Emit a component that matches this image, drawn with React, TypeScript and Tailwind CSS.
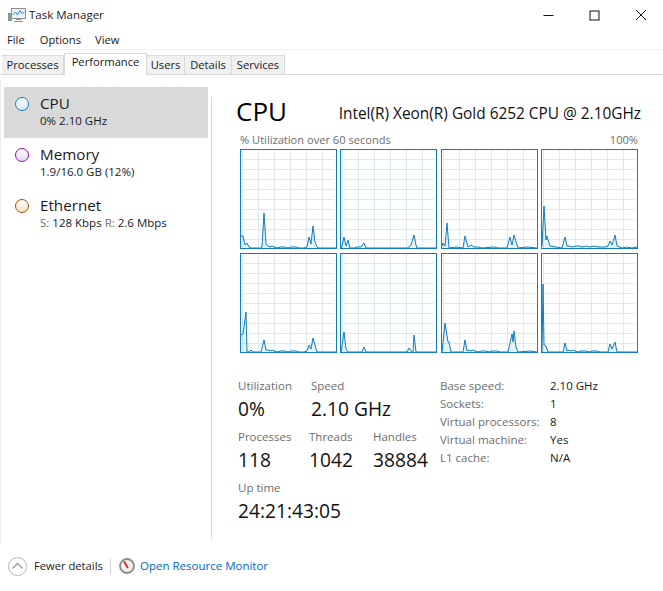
import { Fragment } from "react";

const FONT = "[font-family:'Open_Sans','Noto_Sans',sans-serif]";

const TABS = ["Processes", "Performance", "Users", "Details", "Services"];

const NOISE_A: [number, number][] = [[27, 2], [29, 1], [31, 2], [33, 1], [36, 0], [39, 1], [44, 1], [47, 0], [50, 1], [55, 1], [58, 0], [63, 0]];
const NOISE_B: [number, number][] = [[27, 2], [30, 1], [34, 2], [37, 2], [40, 1], [44, 2], [48, 1], [52, 2], [56, 1], [60, 1], [63, 1]];

// [x, height] samples for each logical processor, read off the picture
const CHARTS: [number, number][][] = [
  [[0, 12], [2, 12], [4, 3], [6, 5], [8, 1], [10, 0], [20, 0], [21, 1], [23, 35], [25, 4], ...NOISE_A, [66, 1], [68, 11], [70, 4], [72, 22], [74, 6], [76, 1], [77, 0], [95, 0]],
  [[0, 0], [1, 2], [3, 11], [5, 2], [7, 8], [9, 0], [14, 0], [15, 1], [20, 1], [23, 5], [25, 0], [66, 0], [68, 1], [70, 3], [73, 13], [75, 3], [76, 0], [95, 0]],
  [[0, 2], [1, 5], [3, 2], [5, 25], [7, 0], [14, 1], [21, 0], [23, 12], [26, 1], [29, 3], [32, 1], [36, 1], [40, 0], [52, 1], [56, 0], [65, 0], [68, 11], [70, 3], [72, 13], [76, 0], [85, 1], [95, 0]],
  [[0, 2], [2, 42], [4, 8], [5, 12], [8, 2], [20, 0], [23, 11], [25, 2], ...NOISE_B, [66, 2], [68, 7], [70, 3], [73, 13], [75, 2], [80, 0], [85, 1], [90, 0], [95, 1]],
  [[0, 17], [2, 18], [5, 40], [6, 0], [8, 0], [10, 2], [12, 0], [20, 0], [23, 12], [25, 2], ...NOISE_A, [66, 1], [68, 7], [70, 3], [72, 14], [76, 0], [95, 0]],
  [[0, 0], [3, 20], [5, 3], [7, 0], [21, 0], [23, 5], [25, 0], [66, 0], [68, 4], [71, 0], [72, 0], [73, 17], [75, 0], [95, 0]],
  [[0, 0], [3, 29], [6, 10], [7, 10], [9, 0], [21, 0], [23, 12], [25, 1], ...NOISE_A, [66, 0], [70, 18], [71, 10], [72, 21], [74, 5], [76, 0], [88, 1], [95, 0]],
  [[0, 0], [1, 68], [2, 7], [4, 6], [6, 0], [21, 0], [23, 9], [25, 1], ...NOISE_A, [66, 0], [68, 8], [70, 3], [73, 10], [75, 0], [95, 0]],
];

const H_LINES = [9.5, 19.5, 29.5, 39.5, 49.5, 59.5, 69.5, 79.5, 89.5];
const V_LINES = [1.5, 17.5, 33.5, 49.5, 65.5, 81.5];

const INFO = [
  ["Base speed:", "2.10 GHz"],
  ["Sockets:", "1"],
  ["Virtual processors:", "8"],
  ["Virtual machine:", "Yes"],
  ["L1 cache:", "N/A"],
];

function Chart({ samples }: { samples: [number, number][] }) {
  const line = samples.map(([x, h]) => `${x},${98 - h}`).join(" ");
  return (
    <div className="h-[100px] border border-[#117dbb] bg-white">
      <svg width="95" height="98" viewBox="0 0 95 98" className="block">
        {H_LINES.map((y) => (
          <line key={y} x1="1" x2="93" y1={y} y2={y} stroke="#d9eaf4" strokeWidth="1" />
        ))}
        {V_LINES.map((x) => (
          <line key={x} x1={x} x2={x} y1="0" y2="98" stroke="#d9eaf4" strokeWidth="1" />
        ))}
        <polygon points={`0,98 ${line} 95,98`} fill="#117dbb" fillOpacity="0.1" />
        <polyline points={line} fill="none" stroke="#117dbb" strokeWidth="1" />
      </svg>
    </div>
  );
}

function Swatch({ border, fill }: { border: string; fill: string }) {
  return (
    <svg width="16" height="16" viewBox="0 0 16 16" className="shrink-0">
      <defs>
        <linearGradient id={`g${border}`} x1="0" y1="0" x2="0" y2="1">
          <stop offset="0" stopColor="#ffffff" />
          <stop offset="1" stopColor={fill} />
        </linearGradient>
      </defs>
      <circle cx="8" cy="8" r="6.5" fill={`url(#g${border})`} stroke={border} strokeWidth="1" />
    </svg>
  );
}

function SideItem({ title, sub, border, fill, active }: { title: React.ReactNode; sub: React.ReactNode; border: string; fill: string; active?: boolean }) {
  return (
    <div className={`flex h-[51px] items-start pl-[10px] pt-[7px] ${active ? "bg-[#d9d9d9]" : ""}`}>
      <div className="pt-[2px]">
        <Swatch border={border} fill={fill} />
      </div>
      <div className="ml-[10px]">
        <div className="text-[15.2px] leading-[18px] text-[#1a1a1a]">{title}</div>
        <div className="mt-[1px] text-[11.5px] leading-[16px] text-[#1a1a1a]">{sub}</div>
      </div>
    </div>
  );
}

function Stat({ label, value, width }: { label: string; value: string; width: string }) {
  return (
    <div className={width}>
      <div className="text-[11.5px] leading-[16px] text-[#6d6d6d]">{label}</div>
      <div className="mt-[2px] text-[19.2px] leading-[26px] text-[#111]">{value}</div>
    </div>
  );
}

export default function App() {
  return (
    <div className={`flex h-[591px] w-[663px] flex-col overflow-hidden bg-white ${FONT} text-[#1a1a1a]`}>
      {/* title bar */}
      <div className="flex h-[30px] shrink-0 items-center">
        <svg width="18" height="16" viewBox="0 0 18 16" className="ml-[8px]">
          <rect x="3.5" y="1.5" width="14" height="10" fill="#eaf3fa" stroke="#8a8f94" />
          <path d="M4.5 8 L7.5 5 L9.5 8 L12 3.5 L14 6.5 L16.5 5" fill="none" stroke="#2f8ac6" strokeWidth="1" />
          <rect x="0.5" y="6.5" width="3" height="7" fill="#7fae7a" stroke="#8a8f94" />
          <path d="M8 12.5h5M6 14.5h9" stroke="#8a8f94" strokeWidth="1.2" />
        </svg>
        <span className="ml-[3px] text-[11.5px] text-[#222]">Task Manager</span>
        <div className="ml-auto flex items-center">
          <svg width="11" height="11" viewBox="0 0 11 11" className="mr-[35px]">
            <path d="M0.5 5.5H10.5" stroke="#111" strokeWidth="1" />
          </svg>
          <svg width="11" height="11" viewBox="0 0 11 11" className="mr-[35px]">
            <rect x="1" y="1" width="9" height="9" fill="none" stroke="#111" strokeWidth="1" />
          </svg>
          <svg width="12" height="12" viewBox="0 0 12 12" className="mr-[16px]">
            <path d="M1 1L11 11M11 1L1 11" stroke="#111" strokeWidth="1" />
          </svg>
        </div>
      </div>

      {/* menu */}
      <div className="flex h-[19px] shrink-0 items-center pl-[7px] text-[11.2px] leading-none">
        <span className="mr-[15px]">File</span>
        <span className="mr-[14px]">Options</span>
        <span>View</span>
      </div>
      <div className="h-[4px] shrink-0 border-t border-[#f0f0f0]" />

      {/* tabs */}
      <div className="flex h-[22px] shrink-0 items-end border-b border-[#d9d9d9] pl-[2px] text-[11.2px]">
        {TABS.map((tab) => (
          <Fragment key={tab}>
            {tab === "Performance" ? (
              <div className="relative z-10 -mb-px flex h-[22px] w-[83px] items-start justify-center border border-b-0 border-[#d9d9d9] bg-white leading-[15px]">
                {tab}
              </div>
            ) : (
              <div className={`flex h-[19px] items-center justify-center border border-b-0 border-l-0 border-[#d9d9d9] bg-[#f0f0f0] ${tab === "Processes" ? "w-[62px] border-l" : tab === "Users" ? "w-[38px]" : tab === "Details" ? "w-[47px]" : "w-[53px]"}`}>
                {tab}
              </div>
            )}
          </Fragment>
        ))}
      </div>

      {/* body */}
      <div className="flex min-h-0 flex-1">
        <div className="mt-[5px] w-px shrink-0 bg-[#ececec]" />
        <div className="w-[207px] shrink-0 pl-[3px] pt-[12px]">
          <SideItem active title="CPU" sub="0%  2.10 GHz" border="#117dbb" fill="#d5e8f4" />
          <SideItem title="Memory" sub="1.9/16.0 GB (12%)" border="#8b12ae" fill="#ecd5f2" />
          <SideItem
            title="Ethernet"
            sub={
              <>
                <span className="text-[#6d6d6d]">S:</span> 128 Kbps <span className="text-[#6d6d6d]">R:</span> 2.6 Mbps
              </>
            }
            border="#a74f01"
            fill="#f5dfc8"
          />
        </div>
        <div className="mt-[22px] mb-[4px] ml-[3px] w-px shrink-0 bg-[#d9d9d9]" />

        <div className="flex min-w-0 flex-1 flex-col pl-[25px]">
          <div className="flex h-[53px] items-end pt-[16px]">
            <span className="-ml-px text-[26px] leading-[34px] text-black">CPU</span>
            <span className="ml-auto mr-[22px] pb-[3px] text-[15.4px] leading-[22px] text-[#111]">Intel(R) Xeon(R) Gold 6252 CPU @ 2.10GHz</span>
          </div>
          <div className="ml-[3px] mr-[25px] mt-[4px] flex h-[16px] items-center justify-between text-[11.1px] text-[#6d6d6d]">
            <span>% Utilization over 60 seconds</span>
            <span>100%</span>
          </div>
          <div className="ml-[3px] mt-[1px] grid grid-cols-[97px_97px_97px_97px] gap-x-[3.4px] gap-y-[4px]">
            {CHARTS.map((samples, i) => (
              <Chart key={i} samples={samples} />
            ))}
          </div>

          <div className="mt-[25px] flex">
            <div className="w-[202px] shrink-0 pl-[1px]">
              <div className="flex h-[51px]">
                <Stat label="Utilization" value="0%" width="w-[73px]" />
                <Stat label="Speed" value="2.10 GHz" width="w-[100px]" />
              </div>
              <div className="flex h-[51px]">
                <Stat label="Processes" value="118" width="w-[71px]" />
                <Stat label="Threads" value="1042" width="w-[64px]" />
                <Stat label="Handles" value="38884" width="w-[60px]" />
              </div>
              <Stat label="Up time" value="24:21:43:05" width="w-[160px]" />
            </div>
            <div className="-mt-px ml-[1px] grid grid-cols-[110px_1fr] content-start text-[11.5px] leading-[18px]">
              {INFO.map(([k, v]) => (
                <Fragment key={k}>
                  <span className="text-[#6d6d6d]">{k}</span>
                  <span className="text-[#1a1a1a]">{v}</span>
                </Fragment>
              ))}
            </div>
          </div>
        </div>
      </div>

      {/* footer */}
      <div className="flex h-[48px] shrink-0 items-start pl-[8px] pt-[11px] text-[11.5px]">
        <div className="flex h-[24px] items-center">
          <svg width="19" height="19" viewBox="0 0 19 19">
            <circle cx="9.5" cy="9.5" r="9" fill="white" stroke="#b5b5b5" />
            <path d="M4.5 11.5L9.5 6.5L14.5 11.5" fill="none" stroke="#9a9a9a" strokeWidth="1.3" />
          </svg>
          <span className="ml-[7px] w-[68px] whitespace-nowrap text-[11.2px] text-[#1a1a1a]">Fewer details</span>
          <div className="ml-[8px] h-[15px] w-px bg-[#cfcfcf]" />
          <svg width="16" height="16" viewBox="0 0 16 16" className="ml-[8px]">
            <circle cx="8" cy="8" r="7" fill="#f3efe6" stroke="#8a8a8a" strokeWidth="1.8" />
            <path d="M5 3.5L9 10" stroke="#c8141e" strokeWidth="1.6" />
          </svg>
          <span className="ml-[5px] text-[#0066cc]">Open Resource Monitor</span>
        </div>
      </div>
    </div>
  );
}
